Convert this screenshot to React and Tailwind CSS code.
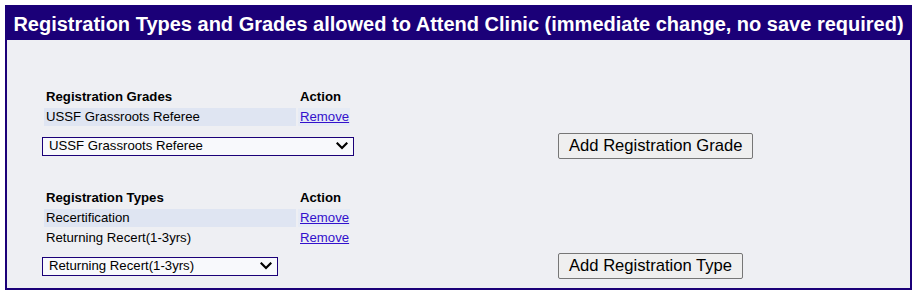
import React from 'react';

const font = { fontFamily: '"Liberation Sans", Arial, sans-serif' };

function Chevron() {
  return (
    <svg width="12" height="8" viewBox="0 0 12 8" className="shrink-0">
      <polyline points="1.5,1.5 6,6 10.5,1.5" fill="none" stroke="#000" strokeWidth="2.2" strokeLinecap="square" />
    </svg>
  );
}

function FakeSelect({ value, width }) {
  return (
    <div className={`${width} h-[19px] flex items-center justify-between bg-[#f8f9fc] border border-[#1b0078] pl-[6px] pr-[5px] text-[13.2px] text-black`}>
      <span>{value}</span>
      <Chevron />
    </div>
  );
}

function RegTable({ title, rows }) {
  return (
    <div className="ml-[2px] flex flex-col gap-[2px] text-[13.2px] text-black">
      <div className="flex gap-[2px] h-[18px] items-center font-bold">
        <div className="w-[252px] px-[2px]">{title}</div>
        <div className="w-[52px] px-[2px]">Action</div>
      </div>
      {rows.map((r, i) => (
        <div key={r} className="flex gap-[2px] h-[18px]">
          <div className={`w-[252px] px-[2px] flex items-center ${i === 0 ? 'bg-[#dfe5f2]' : ''}`}>{r}</div>
          <div className={`w-[52px] px-[2px] flex items-center ${i === 0 ? 'bg-[#e6ebf5]' : ''}`}>
            <a href="#" className="text-[#3311cc] underline">Remove</a>
          </div>
        </div>
      ))}
    </div>
  );
}

function AddButton({ label }) {
  return (
    <button className="h-[26px] px-[10px] bg-[#efefef] border border-[#767676] rounded-[2px] text-[16.6px] text-black leading-none">
      {label}
    </button>
  );
}

export default function App() {
  return (
    <div className="w-[921px] h-[295px] bg-white pt-[5px] pl-[5px]" style={font}>
      <div className="w-[907px] border-2 border-[#1b0078] bg-[#eeeff3]">
        <div className="h-[33px] bg-[#1b0078] flex items-center justify-center">
          <h2 className="text-white text-[20px] font-bold">
            Registration Types and Grades allowed to Attend Clinic (immediate change, no save required)
          </h2>
        </div>

        <div className="pl-[35px] pt-[48px] pb-[9px]">
          {/* Grades */}
          <RegTable title="Registration Grades" rows={['USSF Grassroots Referee']} />
          <div className="mt-[7px] flex items-center h-[26px]">
            <div className="w-[516px]">
              <FakeSelect value="USSF Grassroots Referee" width="w-[312px]" />
            </div>
            <AddButton label="Add Registration Grade" />
          </div>

          {/* Types */}
          <div className="mt-[30px]">
            <RegTable title="Registration Types" rows={['Recertification', 'Returning Recert(1-3yrs)']} />
          </div>
          <div className="mt-[6px] flex items-center h-[26px]">
            <div className="w-[516px]">
              <FakeSelect value="Returning Recert(1-3yrs)" width="w-[236px]" />
            </div>
            <AddButton label="Add Registration Type" />
          </div>
        </div>
      </div>
    </div>
  );
}
